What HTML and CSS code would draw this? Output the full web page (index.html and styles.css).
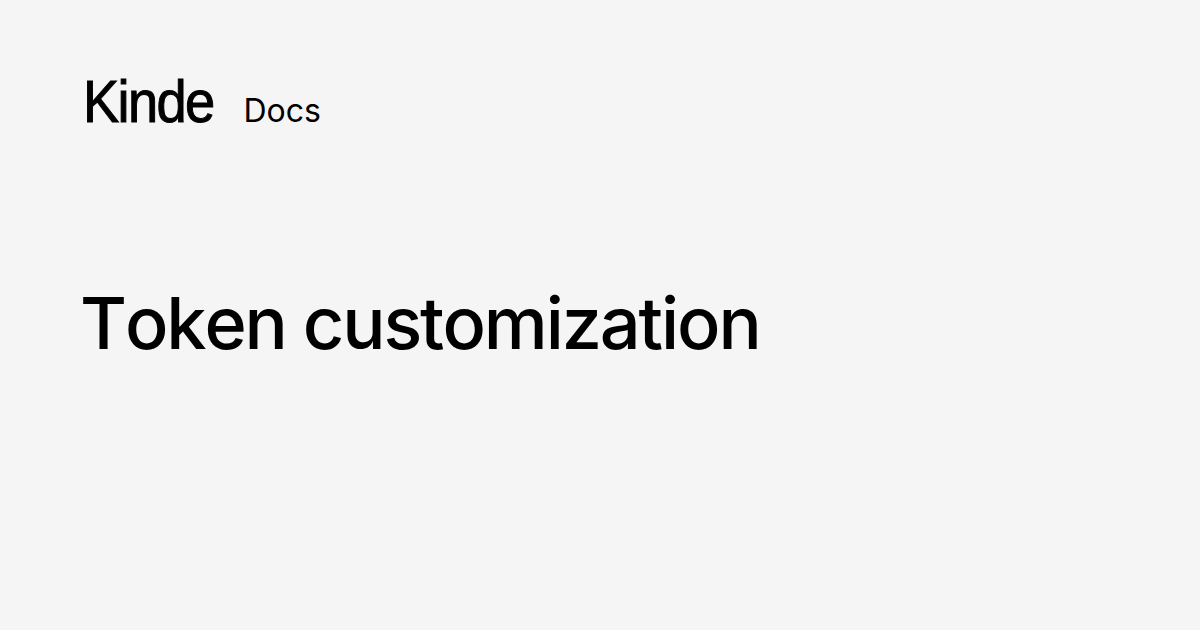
FILE: index.html
```html
<!DOCTYPE html>
<html lang="en">
<head>
<meta charset="utf-8">
<title>Token customization</title>
<link rel="stylesheet" href="styles.css">
</head>
<body>
<main class="card">
  <header class="brand">
    <span class="logo">Kinde</span>
    <span class="section">Docs</span>
  </header>
  <h1 class="title">Token customization</h1>
</main>
</body>
</html>
```
FILE: styles.css
```css
html, body { margin: 0; padding: 0; }
body { width: 1200px; height: 630px; background: #f5f5f5; color: #000; font-family: Inter, sans-serif; overflow: hidden; }
.card { display: flex; flex-direction: column; height: 630px; box-sizing: border-box; padding: 72px 0 0 80px; }
.brand { display: flex; align-items: baseline; gap: 18.5px; padding-left: 3px; }
.logo { font-family: "Liberation Sans", Arial, sans-serif; font-size: 59px; line-height: 60px; font-weight: 400; letter-spacing: -1.8px; -webkit-text-stroke: 1px #000; transform: scaleX(0.92); transform-origin: left center; }
.section { font-size: 32px; line-height: 60px; font-weight: 400; }
.title { margin: 139px 0 0; font-size: 72px; line-height: 86px; font-weight: 500; letter-spacing: -2.12px; font-kerning: none; }
```
